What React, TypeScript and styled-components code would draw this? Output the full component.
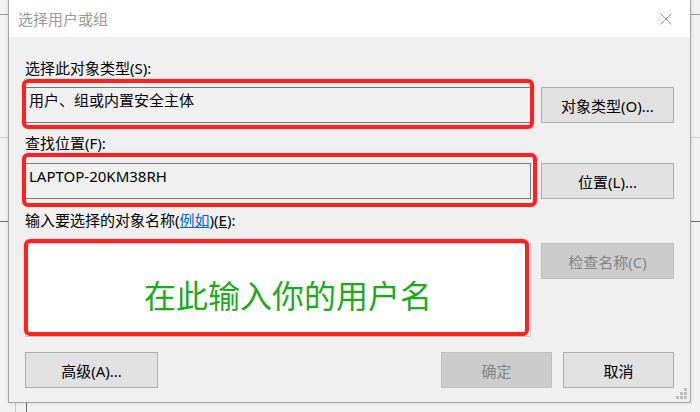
import React from "react";
import styled, { createGlobalStyle } from "styled-components";

const GlobalStyle = createGlobalStyle`
  html, body {
    margin: 0;
    padding: 0;
  }
  body {
    font-family: "Noto Sans", "Noto Sans CJK SC", sans-serif;
    font-size: 15px;
    color: #000;
  }
`;

const App = () => {
  return (
    <Page>
      <GlobalStyle />
      <Dialog>
        <TitleBar>
          <Title>选择用户或组</Title>
          <CloseButton>
            <svg width="12" height="12" viewBox="0 0 12 12">
              <path d="M0.5 0.5 L11.5 11.5 M11.5 0.5 L0.5 11.5" stroke="#9a9a9a" strokeWidth="1" />
            </svg>
          </CloseButton>
        </TitleBar>
        <Body>
          <Label $top={21}>选择此对象类型(S):</Label>
          <Row $top={9}>
            <Field>
              <ReadBox>用户、组或内置安全主体</ReadBox>
              <Mark $inset="-8px -3px -6px -3px" />
            </Field>
            <Button>对象类型(O)...</Button>
          </Row>
          <Label $top={10}>查找位置(F):</Label>
          <Row $top={10}>
            <Field>
              <ReadBox>LAPTOP-20KM38RH</ReadBox>
              <Mark $inset="-10px -6px -8px -3px" />
            </Field>
            <Button>位置(L)...</Button>
          </Row>
          <Label $top={11}>
            输入要选择的对象名称(<Link>例如</Link>)(<u>E</u>):
          </Label>
          <Row $top={13}>
            <Field>
              <NameBox>
                <Hint>在此输入你的用户名</Hint>
              </NameBox>
              <Mark $inset="-4px 2px 1px -1px" />
            </Field>
            <Button disabled>检查名称(C)</Button>
          </Row>
          <Footer>
            <Button $width={133}>高级(A)...</Button>
            <Actions>
              <Button $width={111} disabled>
                确定
              </Button>
              <Button $width={111}>取消</Button>
            </Actions>
          </Footer>
        </Body>
        <Grip>
          <svg width="12" height="12" viewBox="0 0 12 12">
            <rect x="8" y="0" width="3" height="3" fill="#bdbdbd" />
            <rect x="4" y="4" width="3" height="3" fill="#bdbdbd" />
            <rect x="8" y="4" width="3" height="3" fill="#bdbdbd" />
            <rect x="0" y="8" width="3" height="3" fill="#bdbdbd" />
            <rect x="4" y="8" width="3" height="3" fill="#bdbdbd" />
            <rect x="8" y="8" width="3" height="3" fill="#bdbdbd" />
          </svg>
        </Grip>
      </Dialog>
    </Page>
  );
};

export default App;

const Page = styled.div`
  width: 700px;
  height: 412px;
  overflow: hidden;
  background-color: #f2f2f2;
  background-image: linear-gradient(#9c9c9c, #9c9c9c),
    linear-gradient(#d0d0d0, #d0d0d0), linear-gradient(#6a6a6a, #6a6a6a),
    linear-gradient(#c8c8c8, #c8c8c8), linear-gradient(#6a6a6a, #6a6a6a);
  background-repeat: no-repeat;
  background-size: 100% 1px, 100% 1px, 100% 1px, 1px 100%, 1px 100%;
  background-position: 0 14px, 0 137px, 0 221px, 15px 0, 26px 0;
`;

const Dialog = styled.div`
  position: relative;
  margin-left: 8px;
  width: 683px;
  height: 403px;
  box-sizing: border-box;
  border: 1px solid #a3a3a3;
  border-top: none;
  background: #f0f0f0;
  box-shadow: 0 0 4px rgba(0, 0, 0, 0.12);
  display: flex;
  flex-direction: column;
`;

const TitleBar = styled.div`
  height: 37px;
  flex-shrink: 0;
  background: #ffffff;
  display: flex;
  align-items: center;
  justify-content: space-between;
  padding-left: 9px;
`;

const Title = styled.div`
  font-size: 15px;
  line-height: 20px;
  color: #999999;
  margin-top: 1px;
`;

const CloseButton = styled.div`
  width: 46px;
  height: 37px;
  display: flex;
  align-items: center;
  justify-content: center;
  margin-right: 1px;
`;

const Body = styled.div`
  display: flex;
  flex-direction: column;
  padding: 0 16px;
`;

const Label = styled.div<{ $top: number }>`
  margin-top: ${(p) => p.$top}px;
  font-size: 15px;
  line-height: 20px;
  color: #000;
`;

const Link = styled.span`
  color: #0066cc;
  text-decoration: underline;
`;

const Row = styled.div<{ $top: number }>`
  margin-top: ${(p) => p.$top}px;
  display: flex;
  align-items: flex-start;
  gap: 10px;
`;

const Field = styled.div`
  position: relative;
  width: 506px;
`;

const ReadBox = styled.div`
  height: 36px;
  box-sizing: border-box;
  border: 1px solid #7a7a7a;
  background: #f0f0f0;
  padding: 2px 3px;
  font-size: 15px;
  line-height: 20px;
`;

const NameBox = styled.div`
  height: 94px;
  box-sizing: border-box;
  border: 1px solid #c9c9c9;
  background: #ffffff;
  display: flex;
  justify-content: center;
  padding: 30px 0 0 20px;
`;

const Hint = styled.div`
  font-family: "Noto Sans CJK SC", sans-serif;
  font-size: 32px;
  line-height: 40px;
  color: #1eaa1e;
  white-space: nowrap;
`;

const Mark = styled.div<{ $inset: string }>`
  position: absolute;
  inset: ${(p) => p.$inset};
  border: 4px solid #ff2020;
  border-radius: 6px;
  box-shadow: 0 0 1px rgba(255, 0, 0, 0.6);
  pointer-events: none;
`;

const Button = styled.button<{ $width?: number }>`
  width: ${(p) => p.$width ?? 133}px;
  height: 36px;
  flex-shrink: 0;
  box-sizing: border-box;
  border: 1px solid #adadad;
  background: #e1e1e1;
  font-family: "Noto Sans", "Noto Sans CJK SC", sans-serif;
  font-size: 15px;
  color: #000;
  padding: 0;

  &:disabled {
    background: #cccccc;
    border-color: #bfbfbf;
    color: #838383;
  }
`;

const Footer = styled.div`
  margin-top: 15px;
  display: flex;
  justify-content: space-between;
  align-items: center;
`;

const Actions = styled.div`
  display: flex;
  gap: 11px;
`;

const Grip = styled.div`
  position: absolute;
  right: 2px;
  bottom: 2px;
  width: 12px;
  height: 12px;
  line-height: 0;
`;
